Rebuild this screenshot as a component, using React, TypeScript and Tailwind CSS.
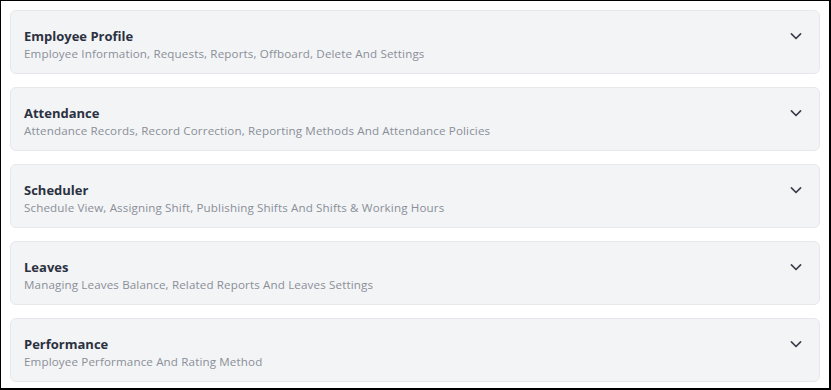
import React from "react";

const items = [
  { title: "Employee Profile", desc: "Employee Information, Requests, Reports, Offboard, Delete And Settings" },
  { title: "Attendance", desc: "Attendance Records, Record Correction, Reporting Methods And Attendance Policies" },
  { title: "Scheduler", desc: "Schedule View, Assigning Shift, Publishing Shifts And Shifts & Working Hours" },
  { title: "Leaves", desc: "Managing Leaves Balance, Related Reports And Leaves Settings" },
  { title: "Performance", desc: "Employee Performance And Rating Method" },
];

function Chevron() {
  return (
    <svg width="20" height="20" viewBox="0 0 24 24" fill="none" stroke="#3a3f4a" strokeWidth="2" strokeLinecap="round" strokeLinejoin="round">
      <path d="M6.5 9.5l5.5 5.5 5.5-5.5" />
    </svg>
  );
}

export default function App() {
  return (
    <div
      className="w-[831px] h-[390px] overflow-hidden bg-white border-l border-t border-r-2 border-b-2 border-black p-[9px] flex flex-col gap-[13px]"
      style={{ fontFamily: "'Open Sans', 'Noto Sans', sans-serif" }}
    >
      {items.map((it) => (
        <div
          key={it.title}
          className="shrink-0 h-[64px] rounded-[6px] border border-[#e6e8eb] bg-[#f3f4f6] px-[13px] pt-[15px] pb-[11px] flex flex-col"
        >
          <div className="h-[20px] flex items-center justify-between">
            <span className="text-[13px] leading-[20px] font-bold text-[#2b3140]">{it.title}</span>
            <Chevron />
          </div>
          <div className="text-[11.6px] leading-[16px] tracking-[0.14px] text-[#8a8f98]">{it.desc}</div>
        </div>
      ))}
    </div>
  );
}
